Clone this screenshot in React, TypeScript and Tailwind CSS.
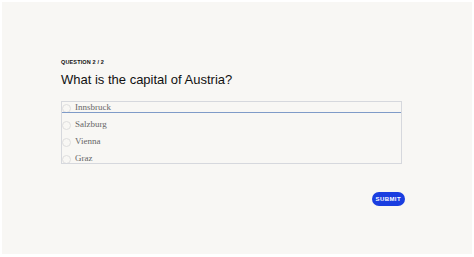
import { useState } from "react";

const OPTIONS = ["Innsbruck", "Salzburg", "Vienna", "Graz"];

export default function App() {
  const [selected, setSelected] = useState<string | null>(null);

  return (
    <div className="h-[257px] w-[474px] bg-white p-[2px] pb-[3px]">
      <div className="h-full w-full bg-[#f8f7f4] pl-[59px] pr-[70px] pt-[57px] font-['Liberation_Sans',Arial,sans-serif]">
        <p className="text-[5.5px] font-bold uppercase leading-[7px] tracking-[0.15px] text-[#111]">Question 2 / 2</p>
        <h1 className="mt-[6px] text-[13px] leading-[16px] text-[#111]">What is the capital of Austria?</h1>

        <div className="relative mt-[13px] h-[63px] overflow-hidden border border-[#d6d8dd]">
          <div className="-mt-[2.5px] flex flex-col">
            {OPTIONS.map((opt) => (
              <label key={opt} className="flex h-[17px] cursor-pointer items-center gap-[4px]">
                <span className="flex h-[9px] w-[9px] items-center justify-center rounded-full border border-[#dedede] bg-[#f8f7f4]">
                  {selected === opt && <span className="h-[5px] w-[5px] rounded-full bg-[#1a3ee0]" />}
                </span>
                <input
                  type="radio"
                  name="q"
                  className="hidden"
                  checked={selected === opt}
                  onChange={() => setSelected(opt)}
                />
                <span className="font-['Liberation_Serif','Times_New_Roman',serif] text-[9px] text-[#666]">{opt}</span>
              </label>
            ))}
          </div>
          {/* focus ring on first option */}
          <div className="pointer-events-none absolute -inset-x-px -top-px h-[12px] border border-[#7f9bc8]" />
        </div>

        <div className="mt-[28px] flex justify-end">
          <button className="-mr-[3px] h-[14px] rounded-full bg-[#1a3ee0] px-[4px] text-[6px] font-bold uppercase tracking-[0.4px] text-white">
            Submit
          </button>
        </div>
      </div>
    </div>
  );
}
